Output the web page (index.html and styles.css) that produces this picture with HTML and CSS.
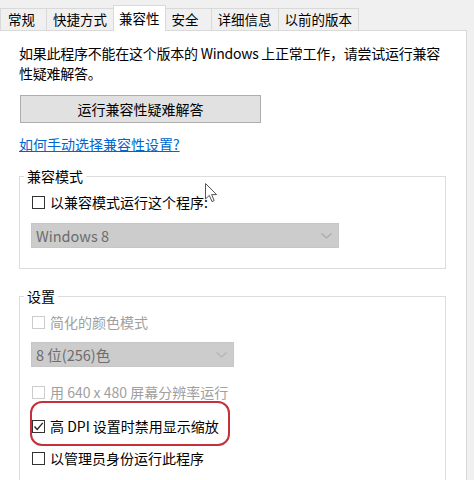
FILE: index.html
```html
<!DOCTYPE html>
<html lang="zh-CN">
<head>
<meta charset="utf-8">
<title>兼容性</title>
<link rel="stylesheet" href="styles.css">
</head>
<body>
<div class="window">
  <div class="tabs">
    <div class="tab first">常规</div>
    <div class="tab">快捷方式</div>
    <div class="tab active">兼容性</div>
    <div class="tab">安全</div>
    <div class="tab">详细信息</div>
    <div class="tab">以前的版本</div>
  </div>
  <div class="panel">
    <p class="intro">如果此程序不能在这个版本的 Windows 上正常工作，请尝试运行兼容<br>性疑难解答。</p>
    <button class="btn" type="button">运行兼容性疑难解答</button>
    <a class="link" href="#">如何手动选择兼容性设置?</a>

    <fieldset class="group group-mode">
      <legend class="legend">兼容模式</legend>
      <div class="check"><span class="box"></span><span class="label">以兼容模式运行这个程序:</span></div>
      <div class="select select-os">
        <span class="select-text">Windows 8</span>
        <svg class="chev" width="11" height="6" viewBox="0 0 11 6"><polyline points="0.5,0.5 5.5,5 10.5,0.5" fill="none" stroke="#a9a9a9" stroke-width="1.2"/></svg>
      </div>
    </fieldset>

    <fieldset class="group group-settings">
      <legend class="legend">设置</legend>
      <div class="check disabled"><span class="box"></span><span class="label">简化的颜色模式</span></div>
      <div class="select select-color">
        <span class="select-text">8 位(256)色</span>
        <svg class="chev" width="11" height="6" viewBox="0 0 11 6"><polyline points="0.5,0.5 5.5,5 10.5,0.5" fill="none" stroke="#b5b5b5" stroke-width="1.2"/></svg>
      </div>
      <div class="check disabled row-640"><span class="box"></span><span class="label">用 640 x 480 屏幕分辨率运行</span></div>
      <div class="check row-dpi">
        <span class="box"><svg width="11" height="11" viewBox="0 0 11 11"><polyline points="1.5,5.5 4.2,8.5 9.8,1.8" fill="none" stroke="#222" stroke-width="1.3"/></svg></span>
        <span class="label">高 DPI 设置时禁用显示缩放</span>
        <span class="highlight"></span>
      </div>
      <div class="check row-admin"><span class="box"></span><span class="label">以管理员身份运行此程序</span></div>
    </fieldset>
  </div>
  <svg class="cursor" width="13" height="20" viewBox="0 0 13 20"><path d="M0.5,0.5 L0.5,16 L4.3,12.4 L7,18.6 L9.2,17.6 L6.6,11.6 L11.6,11.6 Z" fill="#fff" stroke="#555" stroke-width="1" stroke-linejoin="round"/></svg>
</div>
</body>
</html>
```

FILE: styles.css
```css
html, body {
  margin: 0;
  padding: 0;
}
body {
  background: #f0f0f0;
  font-family: "Noto Sans CJK SC", sans-serif;
  font-size: 14px;
  color: #000;
  overflow: hidden;
}
.window {
  position: relative;
  width: 474px;
  height: 480px;
  overflow: hidden;
}
.tabs {
  display: flex;
  align-items: flex-end;
  height: 31px;
  box-sizing: border-box;
}
.tab {
  position: relative;
  height: 22px;
  box-sizing: border-box;
  padding: 0 6px;
  min-width: 47px;
  border: 1px solid #d9d9d9;
  border-bottom: none;
  margin-right: -1px;
  background: #f0f0f0;
  font-size: 13.5px;
  line-height: 21px;
  margin-bottom: 1px;
}
.tab.first {
  padding-left: 7px;
}
.tab.active {
  height: 26px;
  background: #fff;
  margin-bottom: 0;
  z-index: 2;
  line-height: 25px;
  padding-right: 5px;
  padding-left: 5px;
}
.panel {
  position: relative;
  margin-top: -1px;
  margin-left: -1px;
  width: 468px;
  height: 460px;
  box-sizing: border-box;
  background: #fff;
  border: 1px solid #d9d9d9;
  padding: 12px 0 0 19px;
}
.intro {
  margin: 0;
  line-height: 20px;
  letter-spacing: -0.25px;
}
.btn {
  display: block;
  margin: 12px 0 0 1px;
  width: 241px;
  height: 28px;
  background: #e1e1e1;
  border: 1px solid #adadad;
  font-family: "Noto Sans CJK SC", sans-serif;
  font-size: 14px;
  color: #000;
  padding: 0;
}
.link {
  display: block;
  width: fit-content;
  margin-top: 11px;
  line-height: 20px;
  color: #0066cc;
  text-decoration: underline;
}
.group {
  margin: 12px 0 0 0;
  width: 427px;
  box-sizing: border-box;
  border: 1px solid #dcdcdc;
  padding: 6px 11px 20px 11px;
}
.group-settings {
  margin-top: 17px;
  padding-bottom: 40px;
}
.legend {
  padding: 0 3px;
  margin-left: -7px;
  line-height: 20px;
}
.check {
  position: relative;
  display: flex;
  align-items: center;
  height: 20px;
  line-height: 20px;
}
.box {
  width: 13px;
  height: 13px;
  box-sizing: border-box;
  border: 1px solid #333;
  background: #fff;
  margin-right: 5px;
  margin-left: 1px;
  display: flex;
  align-items: center;
  justify-content: center;
  flex: none;
}
.check.disabled .box {
  border-color: #cccccc;
}
.check.disabled .label {
  color: #a0a0a0;
}
.select {
  display: flex;
  align-items: center;
  justify-content: space-between;
  height: 25px;
  box-sizing: border-box;
  background: #cccccc;
  border: 1px solid #c6c6c6;
  padding: 0 6px 0 4px;
  color: #6d6d6d;
  margin-top: 11px;
  font-size: 14.5px;
}
.select-os {
  width: 308px;
}
.select-color {
  width: 203px;
  margin-top: 10px;
}
.select-text {
  line-height: 23px;
}
.row-640 {
  margin-top: 15px;
}
.row-dpi {
  margin-top: 14px;
}
.row-admin {
  margin-top: 12px;
}
.highlight {
  position: absolute;
  left: -1px;
  top: -15px;
  width: 200px;
  height: 45px;
  box-sizing: border-box;
  border: 2px solid #c5303a;
  border-radius: 12px;
  pointer-events: none;
}
.cursor {
  position: absolute;
  left: 205px;
  top: 183px;
}
```
